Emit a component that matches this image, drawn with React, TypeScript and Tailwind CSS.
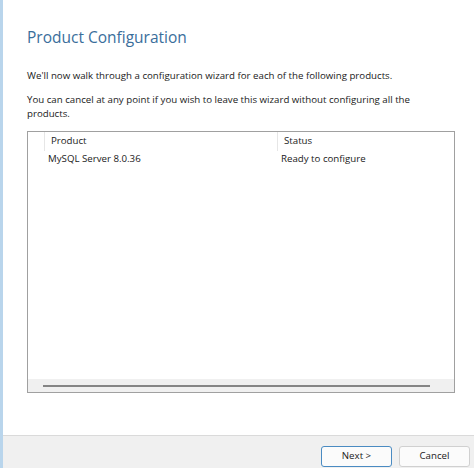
import React from "react";

const rows = [{ product: "MySQL Server 8.0.36", status: "Ready to configure" }];

export default function App() {
  return (
    <div
      className="flex h-[468px] w-[474px] overflow-hidden bg-white text-[#1a1a1a]"
      style={{ fontFamily: '"Open Sans", "Noto Sans", sans-serif' }}
    >
      {/* left accent strip */}
      <div className="w-[3px] shrink-0 bg-[#b9d5ec]" />

      <div className="flex flex-1 flex-col">
        {/* content */}
        <div className="flex flex-col pl-[24px] pr-[19px] pt-[27px]">
          <h1 className="text-[15.5px] leading-[20px] text-[#3a6e9b]">Product Configuration</h1>

          <p className="mt-[22px] text-[9.7px] leading-[14px]">
            We'll now walk through a configuration wizard for each of the following products.
          </p>
          <p className="mt-[10px] max-w-[415px] text-[9.7px] leading-[14px]">
            You can cancel at any point if you wish to leave this wizard without configuring all the products.
          </p>

          {/* product list */}
          <div className="mt-[10px] flex h-[262px] flex-col border border-[#a0a0a0]">
            <div className="flex flex-1 flex-col text-[9.7px]">
              <div className="flex h-[19px] items-center">
                <div className="h-full w-[17px] border-r border-[#e6e6e6]" />
                <div className="flex h-full w-[233px] items-center border-r border-[#e6e6e6] pl-[6px]">Product</div>
                <div className="pl-[6px]">Status</div>
              </div>
              {rows.map((r) => (
                <div key={r.product} className="flex h-[16px] items-center">
                  <div className="w-[251px] pl-[20px]">{r.product}</div>
                  <div className="pl-[2px]">{r.status}</div>
                </div>
              ))}
            </div>
            {/* horizontal scrollbar */}
            <div className="flex h-[13px] items-center bg-[#f0f0f0] pl-[15px] pr-[24px]">
              <div className="h-[2px] flex-1 bg-[#858585]" />
            </div>
          </div>
        </div>

        {/* footer */}
        <div className="mt-auto flex h-[33px] items-start justify-end gap-[7px] border-t border-[#dadada] bg-[#f0f0f0] pr-[4px] pt-[10px]">
          <button className="h-[21px] w-[71px] rounded-[3px] border border-[#4a8bc2] bg-[#fbfbfb] text-[9.7px]">
            Next &gt;
          </button>
          <button className="h-[21px] w-[71px] rounded-[3px] border border-[#d0d0d0] bg-[#fbfbfb] text-[9.7px]">
            Cancel
          </button>
        </div>
      </div>
    </div>
  );
}
